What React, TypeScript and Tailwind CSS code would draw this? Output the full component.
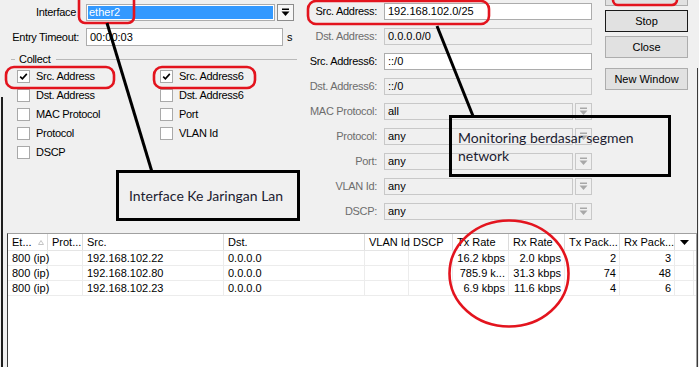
import type { ReactNode } from 'react'

function DropIcon({ color = '#000' }: { color?: string }) {
  return (
    <svg width="9" height="9" viewBox="0 0 9 9">
      <rect x="1" y="0.5" width="7" height="1.5" fill={color} />
      <path d="M0.5 3.5h8L4.5 8z" fill={color} />
    </svg>
  )
}

function DropBtn({ disabled }: { disabled?: boolean }) {
  return (
    <div
      className={`flex items-center justify-center w-[17px] h-[17px] border ${
        disabled ? 'border-[#c8c8c8] bg-[#f0f0f0]' : 'border-[#8c8c8c] bg-[#f7f7f7]'
      }`}
    >
      <DropIcon color={disabled ? '#a8a8a8' : '#000'} />
    </div>
  )
}

function Check({ checked, label }: { checked?: boolean; label: string }) {
  return (
    <div className="flex items-center h-[19px] gap-[6px]">
      <div className="flex items-center justify-center w-[13px] h-[13px] border border-[#a9a9a9] bg-white">
        {checked && (
          <svg width="11" height="11" viewBox="0 0 11 11">
            <path d="M2.2 5.6l2.2 2.3 4.4-5" fill="none" stroke="#000" strokeWidth="1.6" />
          </svg>
        )}
      </div>
      <span className="tracking-[-0.3px]">{label}</span>
    </div>
  )
}

interface RowProps {
  label: string
  value: string
  disabled?: boolean
  dropdown?: boolean
}

function FormRow({ label, value, disabled, dropdown }: RowProps) {
  return (
    <div className="flex items-center h-[17px]">
      <span
        className={`w-[77px] text-right tracking-[-0.3px] ${
          disabled ? 'text-[#6d6d6d]' : 'text-black'
        }`}
      >
        {label}
      </span>
      <div
        className={`ml-[7px] h-[17px] flex items-center pl-[3px] border ${
          dropdown ? 'w-[189px]' : 'w-[208px]'
        } ${disabled ? 'border-[#c8c8c8] bg-[#f0f0f0]' : 'border-[#acacac] bg-white'}`}
      >
        {value}
      </div>
      {dropdown && (
        <div className="ml-[2px]">
          <DropBtn disabled />
        </div>
      )}
    </div>
  )
}

function Button({ children, focused }: { children?: ReactNode; focused?: boolean }) {
  return (
    <div
      className={`flex items-center justify-center w-[83px] h-[22px] border bg-[#e1e1e1] ${
        focused ? 'border-[#1a1a1a]' : 'border-[#adadad]'
      }`}
    >
      {children}
    </div>
  )
}

const COLS = [
  'w-[40px]',
  'w-[35px]',
  'w-[141px]',
  'w-[141px]',
  'w-[44px]',
  'w-[44px]',
  'w-[56px]',
  'w-[56px]',
  'w-[55px]',
  'w-[55px]',
  'w-[19px]',
]

const HEADERS = ['Et...', 'Prot...', 'Src.', 'Dst.', 'VLAN Id', 'DSCP', 'Tx Rate', 'Rx Rate', 'Tx Pack...', 'Rx Pack...']

const ROWS = [
  ['800 (ip)', '', '192.168.102.22', '0.0.0.0', '', '', '16.2 kbps', '2.0 kbps', '2', '3'],
  ['800 (ip)', '', '192.168.102.80', '0.0.0.0', '', '', '785.9 k...', '31.3 kbps', '74', '48'],
  ['800 (ip)', '', '192.168.102.23', '0.0.0.0', '', '', '6.9 kbps', '11.6 kbps', '4', '6'],
]

export default function App() {
  return (
    <div className="relative w-[699px] h-[367px] overflow-hidden bg-[#f0f0f0] text-[11px] leading-none text-black font-['Liberation_Sans',Arial,sans-serif]">
      {/* Form area */}
      <div className="flex h-[225px]">
        {/* Left: interface + collect */}
        <div className="w-[300px] flex flex-col pt-[4px]">
          <div className="flex items-center h-[17px]">
            <span className="w-[76px] text-right tracking-[-0.3px]">Interface</span>
            <div className="ml-[10px] w-[189px] h-[17px] border border-[#acacac] bg-white p-[1px]">
              <div className="h-full bg-[#3399ff] text-white flex items-center pl-[1px]">ether2</div>
            </div>
            <div className="ml-[2px]">
              <DropBtn />
            </div>
          </div>
          <div className="flex items-center h-[18px] mt-[7px]">
            <span className="w-[79px] text-right tracking-[-0.3px]">Entry Timeout:</span>
            <div className="ml-[7px] w-[197px] h-[18px] border border-[#acacac] bg-white flex items-center pl-[3px]">
              00:00:03
            </div>
            <span className="ml-[4px]">s</span>
          </div>

          {/* Collect group */}
          <div className="flex items-center h-[12px] mt-[7px]">
            <div className="ml-[11px] w-[4px] h-px bg-[#b9b9b9]" />
            <span className="ml-[4px] tracking-[-0.3px]">Collect</span>
            <div className="ml-[5px] w-[241px] h-px bg-[#b9b9b9]" />
          </div>
          <div className="flex mt-[2px] pl-[17px]">
            <div className="w-[143px] flex flex-col">
              <Check checked label="Src. Address" />
              <Check label="Dst. Address" />
              <Check label="MAC Protocol" />
              <Check label="Protocol" />
              <Check label="DSCP" />
            </div>
            <div className="flex flex-col">
              <Check checked label="Src. Address6" />
              <Check label="Dst. Address6" />
              <Check label="Port" />
              <Check label="VLAN Id" />
            </div>
          </div>
        </div>

        {/* Middle: filters */}
        <div className="flex flex-col gap-[8px] pt-[3px]">
          <FormRow label="Src. Address:" value="192.168.102.0/25" />
          <FormRow label="Dst. Address:" value="0.0.0.0/0" disabled />
          <FormRow label="Src. Address6:" value="::/0" />
          <FormRow label="Dst. Address6:" value="::/0" disabled />
          <FormRow label="MAC Protocol:" value="all" disabled dropdown />
          <FormRow label="Protocol:" value="any" disabled dropdown />
          <FormRow label="Port:" value="any" disabled dropdown />
          <FormRow label="VLAN Id:" value="any" disabled dropdown />
          <FormRow label="DSCP:" value="any" disabled dropdown />
        </div>

        {/* Right: buttons (top one scrolled off the capture) */}
        <div className="ml-[13px] flex flex-col -mt-[16px]">
          <Button />
          <div className="mt-[4px]">
            <Button focused>Stop</Button>
          </div>
          <div className="mt-[4px]">
            <Button>Close</Button>
          </div>
          <div className="mt-[10px]">
            <Button>New Window</Button>
          </div>
        </div>
      </div>

      {/* Table */}
      <div className="mt-[8px] ml-[7px] w-[690px] h-[142px] border-l border-t border-r border-l-[#3c3c3c] border-t-[#a0a0a0] border-r-[#a0a0a0] bg-white flex flex-col">
        <div className="flex h-[17px] border-b border-[#e5e5e5]">
          {HEADERS.map((h, i) => (
            <div
              key={h}
              className={`${COLS[i]} relative flex items-center pl-[4px] border-r border-[#dcdcdc] whitespace-nowrap`}
            >
              {h}
              {i === 0 && (
                <svg className="absolute right-[3px] top-[6px]" width="6" height="5" viewBox="0 0 6 5">
                  <path d="M0.5 4.5h5L3 0.5z" fill="none" stroke="#c4c4c4" />
                </svg>
              )}
            </div>
          ))}
          <div className={`${COLS[10]} flex items-center justify-center`}>
            <svg width="9" height="5" viewBox="0 0 9 5">
              <path d="M0 0h9L4.5 5z" fill="#000" />
            </svg>
          </div>
        </div>
        {ROWS.map((row, r) => (
          <div key={r} className="flex h-[15px] border-b border-[#ececec]">
            {row.map((cell, i) => (
              <div
                key={i}
                className={`${COLS[i]} flex items-center border-r border-[#ececec] whitespace-nowrap ${
                  i >= 6 ? 'justify-end pr-[3px]' : 'pl-[4px]'
                }`}
              >
                {cell}
              </div>
            ))}
            <div className={`${COLS[10]} border-r border-[#ececec]`} />
          </div>
        ))}
      </div>

      {/* Window edges behind the capture */}
      <div className="absolute left-[1px] top-[97px] w-[2px] h-[270px] bg-[#1e1e1e]" />
      <div className="absolute left-[697px] top-[68px] w-px h-[299px] bg-[#3a3a3a]" />

      {/* Annotations */}
      <svg className="absolute inset-0 pointer-events-none" width="699" height="367" viewBox="0 0 699 367">
        <g fill="none" stroke="#e3141e" strokeWidth="2.6">
          <rect x="79" y="-8" width="55" height="31" rx="6" />
          <rect x="6" y="67" width="108" height="21" rx="8" />
          <rect x="154" y="67" width="101" height="21" rx="8" />
          <rect x="308" y="1" width="181" height="23" rx="8" />
          <rect x="613" y="-16" width="64" height="21" rx="5" />
          <ellipse cx="509" cy="273.5" rx="59.5" ry="53" />
        </g>
        <g stroke="#000" strokeWidth="3">
          <line x1="107" y1="23" x2="152" y2="172" />
          <line x1="437" y1="26" x2="473" y2="116" />
        </g>
      </svg>
      <div className="absolute left-[116px] top-[170px] w-[184px] h-[51px] border-[3px] border-black flex items-center pl-[10px] text-[14px] text-[#1c1c30] font-['Lato',sans-serif]">
        Interface Ke Jaringan Lan
      </div>
      <div className="absolute left-[449px] top-[115px] w-[222px] h-[62px] border-[3px] border-black pl-[6px] pt-[11px] text-[14px] leading-[18px] text-[#1c1c30] font-['Lato',sans-serif] whitespace-pre">
        {'Monitoring berdasar segmen\nnetwork'}
      </div>
    </div>
  )
}
